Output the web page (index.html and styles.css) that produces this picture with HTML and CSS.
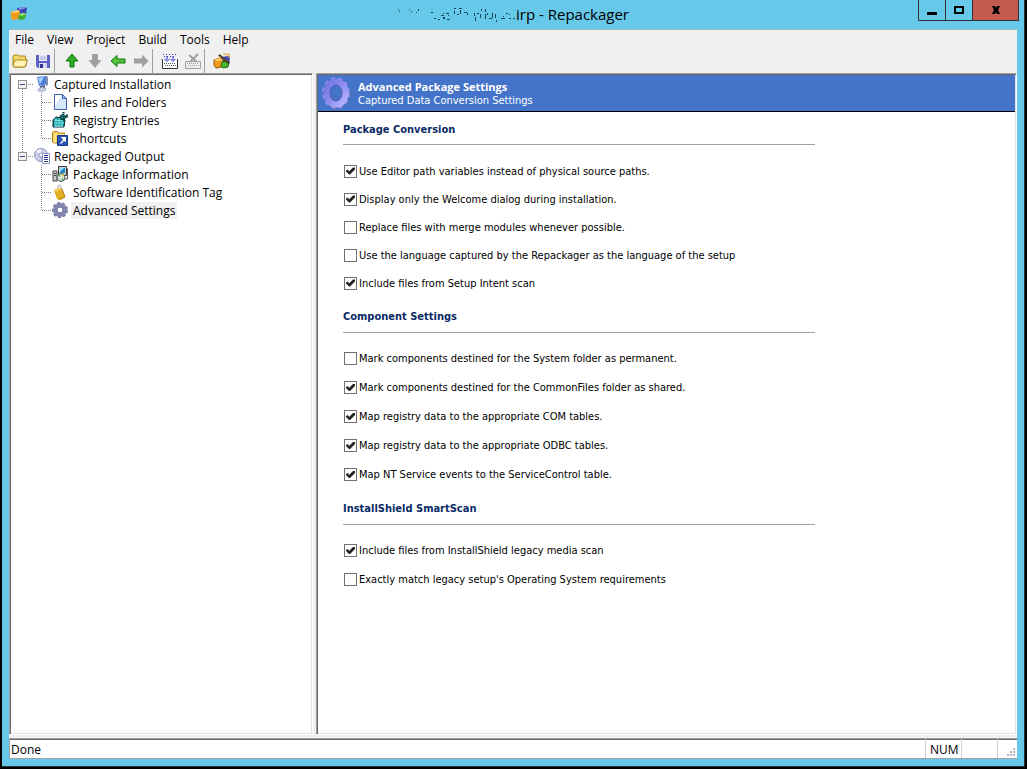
FILE: index.html
```
<!DOCTYPE html>
<html lang="en">
	<head>
		<meta charset="UTF-8">
		<meta name="viewport" content="width=device-width, initial-scale=1.0">
		<title>Repackager</title>
		<link rel="stylesheet" href="styles.css">
	</head>
	<body>
		<div class="window">
			<header class="titlebar">
				<svg class="app-icon" width="18" height="16" viewBox="0 0 18 16">
					<path d="M7 2l8-1 2 1-1 6-4 3-5-3z" fill="#3b43b8"/>
					<path d="M8 2l7-1 1 1-6 2z" fill="#8a92e8"/>
					<path d="M1 6l7-2 2 2-1 7-6 1-2-2z" fill="#f29a1c"/>
					<path d="M1 6l7-2 2 2-6 1z" fill="#ffd27a"/>
					<path d="M9 8l5-1 2 1-1 5-5 1-2-2z" fill="#3fae2c"/>
					<path d="M9 8l5-1 2 1-5 2z" fill="#a4e47a"/>
				</svg>
				<div class="title">
					<svg class="title-marks" width="119" height="20" viewBox="0 0 119 20" shape-rendering="crispEdges">
						<path d="M1 5h1v1h-1zM2 7h1v1h-1zM12 5h1v1h-1zM14 7h1v1h-1zM19 8h1v1h-1zM21 5h1v2h-1zM34 8h2v1h-2zM46 9h1v1h-1zM37 14h2v1h-2zM41 15h2v1h-2zM44 11h3v1h-3zM46 13h2v2h-2zM49 9h3v1h-3zM51 11h1v1h-1zM50 15h3v1h-3zM57 4h2v1h-2zM57 7h1v3h-1zM60 10h2v1h-2zM62 4h3v1h-3zM63 6h1v4h-1zM67 8h3v1h-3zM70 9h1v2h-1zM77 9h1v3h-1zM78 13h1v4h-1zM80 9h2v1h-2zM84 5h1v2h-1zM83 10h1v4h-1zM88 5h1v3h-1zM88 10h1v5h-1zM90 9h1v2h-1zM95 9h1v5h-1zM92 14h3v1h-3zM98 10h1v4h-1zM99 16h1v2h-1zM104 14h4v1h-4zM106 12h1v1h-1zM109 9h2v1h-2zM112 10h1v1h-1zM112 14h2v1h-2zM116 14h2v1h-2z" fill="#17455a"/>
					</svg>
					<span>irp - Repackager</span>
				</div>
				<div class="controls">
					<button class="control" aria-label="Minimize"><svg width="12" height="12" viewBox="0 0 12 12"><path d="M1 8h10v3H1z"/></svg></button>
					<button class="control" aria-label="Maximize"><svg width="12" height="12" viewBox="0 0 12 12"><path d="M1 2h10v8H1zM3 4v4h6V4z" fill-rule="evenodd"/></svg></button>
					<button class="control close" aria-label="Close"><svg width="12" height="12" viewBox="0 0 12 12"><path d="M2 2h3l1 2 1-2h3L8 6l2 4H7L6 8l-1 2H2l2-4z"/></svg></button>
				</div>
			</header>

			<div class="client">
				<nav class="menu">
					<button>File</button>
					<button>View</button>
					<button>Project</button>
					<button>Build</button>
					<button>Tools</button>
					<button>Help</button>
				</nav>

				<div class="toolbar">
					<button aria-label="Open">
						<svg width="16" height="16" viewBox="0 0 16 16"><path d="M1 4l1-2h4l1 1h6l1 2v8l-1 1H2l-1-2z" fill="#f0d86a" stroke="#a8871a"/><path d="M1 12l2-5h12.500l-2 6-1 1H2z" fill="#fff3b4" stroke="#a8871a"/></svg>
					</button>
					<button aria-label="Save">
						<svg width="16" height="16" viewBox="0 0 16 16"><path d="M1 2h14v13H3l-2-2z" fill="#5a5fc4"/><path d="M4 2h8v6H4z" fill="#e9ebf8"/><path d="M5 4h6M5 6h6" stroke="#a9aee0"/><path d="M4 10h8v5H4z" fill="#d5d8ee"/><path d="M5 11h3v4H5z" fill="#33378e"/></svg>
					</button>
					<span class="sep"></span>
					<button aria-label="Up">
						<svg width="16" height="16" viewBox="0 0 16 16"><path d="M8 1l6 7h-4v6H6V8H2z" fill="#2fae25" stroke="#0b760b"/></svg>
					</button>
					<button aria-label="Down" disabled>
						<svg width="16" height="16" viewBox="0 0 16 16"><path d="M5 1h6v6h3.500L8 15 1.500 7H5z" fill="#a0a0a0"/></svg>
					</button>
					<button aria-label="Back">
						<svg width="16" height="16" viewBox="0 0 16 16"><path d="M1 8l6-5.500V6h8v4H7v3.500z" fill="#55c43e" stroke="#0b760b"/></svg>
					</button>
					<button aria-label="Forward" disabled>
						<svg width="16" height="16" viewBox="0 0 16 16"><path d="M15.500 8L9 1.500V5.500H1v5h8v4z" fill="#a0a0a0"/></svg>
					</button>
					<span class="sep"></span>
					<button aria-label="Build">
						<svg width="16" height="16" viewBox="0 0 16 16"><path d="M.500 6v9.500h15V6" fill="#fff" stroke="#333"/><path d="M2 10.500h12M3 12.500h11" stroke="#555" stroke-dasharray="1 1"/><path d="M1 1.500h14M2 3.500h12" stroke="#3a3ad0" stroke-dasharray="1 2"/><path d="M5 3v4M11 3v4M2.500 6L5 8.500 7.500 6M8.500 6L11 8.500 13.500 6" fill="none" stroke="#2a2ac8"/></svg>
					</button>
					<button aria-label="Stop build" disabled>
						<svg width="16" height="16" viewBox="0 0 16 16"><path d="M.500 8.500h15v7H.500z" fill="#eee" stroke="#a0a0a0"/><path d="M2 10.500h12M3 12.500h11" stroke="#a0a0a0" stroke-dasharray="1 1"/><path d="M4 2l7 6M13 1L5 9" stroke="#a0a0a0" stroke-width="2"/></svg>
					</button>
					<span class="sep"></span>
					<button aria-label="Package wizard">
						<svg width="18" height="16" viewBox="0 0 18 16"><path d="M8 4l7-1 2 2-1 7-7-1z" fill="#4a4fb4"/><path d="M1 7l6-2 3 2-1 7-6 1-2-3z" fill="#f29a1c" stroke="#9a5a0b"/><path d="M1 7l6-2 3 2-6 1z" fill="#ffd76b"/><path d="M9 9l6-1 1 1-1 5-5 1-2-2z" fill="#49b42c" stroke="#1f6c15"/><path d="M6 2l10 8" stroke="#2a1c12" stroke-width="2"/><path d="M7 3l8 6" stroke="#d8b080" stroke-width=".500"/><path d="M10 1h3v2M14 1h2v3h1M6 4h1" fill="none" stroke="#e89a20"/></svg>
					</button>
				</div>

				<div class="panes">
					<aside class="tree">
						<ul>
							<li>
								<span class="guide root first"><button class="toggle" aria-label="Collapse"></button></span>
								<svg class="root-icon" width="16" height="16" viewBox="0 0 16 16"><path d="M3 1l10-1 1 8-9 2z" fill="#4b7edb"/><path d="M4 2l6-1-4 7z" fill="#a9d4fb"/><path d="M12 0l2 1v8l-2 1z" fill="#8890a8"/><path d="M6 10l5-1v3H6z" fill="#4e5b88"/><path d="M4 13l4-2 4 1v2l-4 2-4-1z" fill="#c5cade" stroke="#858caf" stroke-width=".500"/></svg>
								<a href="#">Captured Installation</a>
							</li>
							<li>
								<span class="guide child linked"></span>
								<svg width="16" height="16" viewBox="0 0 16 16"><path d="M2.500.500h8l4 4v11h-12z" fill="#d8e8fc" stroke="#3d5fb0"/><path d="M3 1h6L3 12z" fill="#fff"/><path d="M10.500.500v4h4z" fill="#9dc0f0" stroke="#3d5fb0"/></svg>
								<a href="#">Files and Folders</a>
							</li>
							<li>
								<span class="guide child linked"></span>
								<svg width="16" height="16" viewBox="0 0 16 16"><path d="M1 8l3-3 6 1 3 2-1 7H1z" fill="#0d8890" stroke="#082a30"/><path d="M2 8l8 1M2 11h10M2 14h9M4 6v9M7 6v9M10 8v7" stroke="#7ef0ec"/><path d="M8 4l3-2 3 3-2 3-3-1z" fill="#12898a" stroke="#072d33"/><path d="M10 4l2 1-1 2M10 0h2v2M14 3h2v2h-2z" fill="#3bc5c0" stroke="#072d33"/></svg>
								<a href="#">Registry Entries</a>
							</li>
							<li>
								<span class="guide child linked last"></span>
								<svg width="16" height="16" viewBox="0 0 16 16"><path d="M.500 12V2.500l1-1h4l1 1.500h6v10H2z" fill="#f6d160" stroke="#b08018"/><path d="M3 13V5h10" fill="none" stroke="#fff0a8"/><path d="M5.500 5.500h10v10h-10z" fill="#2f55b4" stroke="#173988"/><path d="M9 7h5v5l-2-1-3 3-1-1 3-3z" fill="#fff"/></svg>
								<a href="#">Shortcuts</a>
							</li>
							<li>
								<span class="guide root second"><button class="toggle" aria-label="Collapse"></button></span>
								<svg class="root-icon" width="16" height="16" viewBox="0 0 16 16"><circle cx="7" cy="7" r="6.500" fill="#cbcfe8" stroke="#8c91b5"/><path d="M7 7L2 3l5-2z" fill="#f6f7ff"/><path d="M7 7l5 4-5 2z" fill="#aab0dc"/><circle cx="7" cy="7" r="2" fill="#fff" stroke="#8c91b5"/><path d="M8.500 5.500h7v10h-7z" fill="#fff" stroke="#8a93c4"/><path d="M10 7.500h4M10 9.500h4M10 11.500h4M10 13.500h4" stroke="#27368b"/></svg>
								<a href="#">Repackaged Output</a>
							</li>
							<li>
								<span class="guide child"></span>
								<svg width="16" height="16" viewBox="0 0 16 16"><path d="M6.500.500h8v9h-8z" fill="#c8d0d8" stroke="#303840"/><path d="M8 2h5v5H8z" fill="#2586c5"/><path d="M8 2h4L8 6z" fill="#8ae0f8"/><path d="M1 5h4v10H1z" fill="#c9c9c9" stroke="#444"/><path d="M2 7.500h2M2 9.500h2" stroke="#444"/><path d="M14 1l1.500 2v10h-3" fill="none" stroke="#555"/><circle cx="9" cy="11.500" r="4" fill="#d8dce0" stroke="#555"/><path d="M9 11.500l-3-2 2-1zM9 11.500l3 2-2 1z" fill="#36bf38"/><path d="M9 11l2-3 1 2z" fill="#f0dd3b"/><circle cx="9" cy="11.500" r="1" fill="#fff"/></svg>
								<a href="#">Package Information</a>
							</li>
							<li>
								<span class="guide child"></span>
								<svg width="16" height="16" viewBox="0 0 16 16"><path d="M2 6l6-2 2 1 3 8-6 3-2-1z" fill="#e0b022"/><path d="M2 6l6-2 2 1-6 3z" fill="#f4cf50"/><path d="M7 16l6-3-3-8" fill="none" stroke="#b37a12"/><path d="M6 5V2l1-1h1l1 2v2" fill="none" stroke="#a8a8a8"/></svg>
								<a href="#">Software Identification Tag</a>
							</li>
							<li>
								<span class="guide child last"></span>
								<svg width="16" height="16" viewBox="0 0 16 16"><circle cx="8" cy="8" r="7" fill="none" stroke="#777aa6" stroke-width="2" stroke-dasharray="3 2"/><circle cx="8" cy="8" r="5" fill="none" stroke="#8487b2" stroke-width="4"/><circle cx="8" cy="8" r="3" fill="none" stroke="#696c94"/></svg>
								<a href="#" class="selected">Advanced Settings</a>
							</li>
						</ul>
					</aside>

					<main class="content">
						<div class="banner">
							<svg width="30" height="34" viewBox="0 0 30 34">
								<defs>
									<linearGradient id="gear" x1="0" y1="0" x2="1" y2="1">
										<stop offset="0" stop-color="#7377e0"/>
										<stop offset=".500" stop-color="#8d8cf2"/>
										<stop offset="1" stop-color="#b9b4ff"/>
									</linearGradient>
								</defs>
								<ellipse cx="16" cy="18" rx="12" ry="14" fill="none" stroke="#62709a" stroke-width="3" stroke-dasharray="4 3"/>
								<ellipse cx="15" cy="17" rx="12" ry="14" fill="none" stroke="#8b8de6" stroke-width="4" stroke-dasharray="4 3"/>
								<ellipse cx="15" cy="17" rx="9" ry="11" fill="none" stroke="url(#gear)" stroke-width="7"/>
								<ellipse cx="15" cy="17" rx="6" ry="8" fill="#4374c9" stroke="#565ca8"/>
							</svg>
							<div>
								<h1>Advanced Package Settings</h1>
								<p>Captured Data Conversion Settings</p>
							</div>
						</div>

						<form class="settings">
							<section class="compact">
								<h2>Package Conversion</h2>
								<label><input type="checkbox" checked>Use Editor path variables instead of physical source paths.</label>
								<label><input type="checkbox" checked>Display only the Welcome dialog during installation.</label>
								<label><input type="checkbox">Replace files with merge modules whenever possible.</label>
								<label><input type="checkbox">Use the language captured by the Repackager as the language of the setup</label>
								<label><input type="checkbox" checked>Include files from Setup Intent scan</label>
							</section>
							<section>
								<h2>Component Settings</h2>
								<label><input type="checkbox">Mark components destined for the System folder as permanent.</label>
								<label><input type="checkbox" checked>Mark components destined for the CommonFiles folder as shared.</label>
								<label><input type="checkbox" checked>Map registry data to the appropriate COM tables.</label>
								<label><input type="checkbox" checked>Map registry data to the appropriate ODBC tables.</label>
								<label><input type="checkbox" checked>Map NT Service events to the ServiceControl table.</label>
							</section>
							<section>
								<h2>InstallShield SmartScan</h2>
								<label><input type="checkbox" checked>Include files from InstallShield legacy media scan</label>
								<label><input type="checkbox">Exactly match legacy setup's Operating System requirements</label>
							</section>
						</form>
					</main>
				</div>

				<footer class="status">
					<span class="message">Done</span>
					<span class="cell">NUM</span>
					<span class="cell"></span>
					<span class="grip">
						<svg width="9" height="9" viewBox="0 0 9 9"><path d="M6 0h2v2H6zM3 3h2v2H3zM6 3h2v2H6zM0 6h2v2H0zM3 6h2v2H3zM6 6h2v2H6z" fill="#b8b8b8"/></svg>
					</span>
				</footer>
			</div>
		</div>
	</body>
</html>
```
FILE: styles.css
```
* {
	box-sizing: border-box;
}

body {
	margin: 0;
	padding: 0 2px 2px;
	height: 100vh;
	background-color: #000;
	color: #000;
	font-family: "Open Sans", "Noto Sans", sans-serif;
	font-size: 12px;
}

button {
	padding: 0;
	border: none;
	background: none;
	color: inherit;
	font: inherit;
}

svg {
	display: block;
	flex: none;
}

ul, h1, h2, p {
	margin: 0;
	padding: 0;
}

.window {
	height: 100%;
	padding: 0 7px 7px;
	display: flex;
	flex-direction: column;
	background-color: #66c9ea;
	border-right: 1px solid #24343a;
	border-bottom: 1px solid #24343a;
}

/* title bar */
.titlebar {
	flex: 0 0 29px;
	display: grid;
	grid-template-columns: 1fr auto 1fr;
	align-items: center;
	padding-bottom: 2px;
}

.app-icon {
	margin-left: 1px;
}

.title {
	display: flex;
	align-items: center;
	font-size: 15px;
	line-height: 20px;
}

.controls {
	align-self: start;
	justify-self: end;
	display: flex;
	margin-right: -2px;
	border: 1px solid #333;
	border-top: none;
}

.control {
	width: 27px;
	height: 20px;
	display: flex;
	align-items: center;
	justify-content: center;
	border-right: 1px solid #333;
}

.control.close {
	width: 45px;
	border-right: none;
	background-color: #c35a50;
}

.client {
	flex: 1;
	min-height: 0;
	display: flex;
	flex-direction: column;
	background-color: #f0f0f0;
	border-top: 1px solid #a5bcc4;
}

/* menu and toolbar */
.menu {
	flex: 0 0 19px;
	display: flex;
	gap: 13px;
	padding-left: 6px;
}

.toolbar {
	flex: 0 0 24px;
	display: flex;
	margin-left: -1px;
}

.toolbar button {
	width: 23px;
	display: flex;
	align-items: center;
	justify-content: center;
}

.sep {
	width: 6px;
	border-left: 1px solid #a0a0a0;
}

.panes {
	flex: 1;
	min-height: 0;
	display: flex;
	gap: 3px;
}

.tree, .content {
	background-color: #fff;
	border: 1px solid;
	border-color: #a0a0a0 #fff #fff #a0a0a0;
	box-shadow: inset 1px 1px #696969, inset -1px -1px #e3e3e3;
	padding: 1px;
}

/* tree */
.tree {
	flex: 0 0 304px;
	padding: 1px 2px;
	overflow: auto;
}

.tree ul {
	list-style: none;
}

.tree li {
	height: 18px;
	display: flex;
	align-items: center;
}

.tree a {
	color: #000;
	text-decoration: none;
	line-height: 17px;
	padding: 0 2px;
	margin-left: 3px;
}

.tree .root-icon + a {
	margin-left: 2px;
}

.tree a.selected {
	background-color: #f0f0f0;
}

/* dotted connector lines, 1px dots every 2px */
.guide {
	--down: linear-gradient(#808080 1px, transparent 1px);
	--across: linear-gradient(90deg, #808080 1px, transparent 1px);
	--blank: linear-gradient(#fff, #fff);
	align-self: stretch;
	flex: none;
	background-repeat: repeat-y, no-repeat, no-repeat, no-repeat, repeat;
}

.guide.root {
	width: 16px;
	margin-left: 6px;
	padding-top: 5px;
	background-image: var(--down), var(--across);
	background-repeat: no-repeat, repeat-x;
	background-size: 1px 2px, 2px 1px;
}

.guide.first {
	background-image: var(--blank), var(--down), var(--blank), var(--blank), var(--across);
	background-repeat: no-repeat, repeat-y, no-repeat, no-repeat, repeat;
	background-size: 9px 9px, 1px 2px, 16px 9px, 16px 8px, 2px 18px;
	background-position: 0 0, 4px 0, 0 0, 0 10px, 0 0;
}

.guide.second {
	background-image: var(--blank), var(--down), var(--blank), var(--blank), var(--across);
	background-repeat: no-repeat, repeat-y, no-repeat, no-repeat, repeat;
	background-size: 9px 8px, 1px 2px, 16px 9px, 16px 8px, 2px 18px;
	background-position: 0 10px, 4px 0, 0 0, 0 10px, 0 0;
}

.guide.child {
	width: 40px;
	background-image: var(--down), var(--blank), var(--blank), var(--blank), var(--across);
	background-size: 1px 2px, 30px 18px, 10px 9px, 10px 8px, 2px 18px;
	background-position: 29px 0, 0 0, 30px 0, 30px 10px, 0 0;
}

.guide.linked {
	background-image: var(--down), var(--down), var(--blank), var(--blank), var(--blank), var(--across);
	background-repeat: repeat-y, repeat-y, no-repeat, no-repeat, no-repeat, repeat;
	background-size: 1px 2px, 1px 2px, 30px 18px, 10px 9px, 10px 8px, 2px 18px;
	background-position: 10px 0, 29px 0, 0 0, 30px 0, 30px 10px, 0 0;
}

.guide.last::after {
	content: "";
	display: block;
	width: 1px;
	height: 18px;
	margin-left: 29px;
	background: linear-gradient(transparent 10px, #fff 10px);
}

.toggle {
	display: block;
	width: 9px;
	height: 9px;
	border: 1px solid #919191;
	background: linear-gradient(#3c4c80, #3c4c80) 1px 3px / 5px 1px no-repeat #f4f4f4;
}

/* settings */
.content {
	flex: 1;
	min-width: 0;
	overflow: auto;
	font-family: "DejaVu Sans Condensed", "DejaVu Sans", sans-serif;
	font-size: 11px;
}

.banner {
	display: flex;
	align-items: center;
	gap: 7px;
	height: 37px;
	padding-left: 3px;
	background-color: #4374c9;
	border-bottom: 1px solid #000;
	color: #fff;
	line-height: 14px;
}

h1, h2 {
	font-size: 11px;
	font-weight: bold;
}

h1 {
	padding-top: 1px;
	font-family: "Open Sans", "Noto Sans", sans-serif;
}

.settings {
	padding: 10px 25px;
}

.settings section {
	width: 68%;
	min-width: 472px;
	margin-bottom: 12px;
}

.settings h2 {
	margin-bottom: 11px;
	padding-bottom: 7px;
	border-bottom: 1px solid #a0a0a0;
	color: #0a2a66;
	line-height: 16px;
}

.settings .compact h2 {
	margin-bottom: 12px;
	padding-bottom: 6px;
}

.settings label {
	display: flex;
	align-items: center;
	gap: 2px;
	height: 29px;
	white-space: nowrap;
}

.compact label {
	height: 28px;
}

.settings input {
	appearance: none;
	flex: none;
	width: 13px;
	height: 13px;
	margin: 0 0 0 1px;
	border: 1px solid #707070;
	background-color: #fff;
}

.settings input:checked::before {
	content: "";
	display: block;
	height: 11px;
	background-color: #222;
	clip-path: polygon(1px 5px, 3px 4px, 4px 6px, 8px 2px, 10px 2px, 10px 4px, 5px 9px, 4px 9px, 1px 6px);
}

/* status bar */
.status {
	flex: 0 0 21px;
	margin-top: 3px;
	display: flex;
	background-color: #fff;
	border: 1px solid #a0a0a0;
	border-right: none;
	box-shadow: inset 0 1px #696969;
	line-height: 16px;
}

.message, .cell {
	padding-top: 3px;
}

.message {
	flex: 1;
	padding-left: 1px;
}

.cell {
	width: 36px;
	padding-left: 4px;
	border-left: 1px solid #d0d0d0;
}

.grip {
	width: 20px;
	padding: 9px 0 0 9px;
	border-left: 1px solid #d0d0d0;
}
```
